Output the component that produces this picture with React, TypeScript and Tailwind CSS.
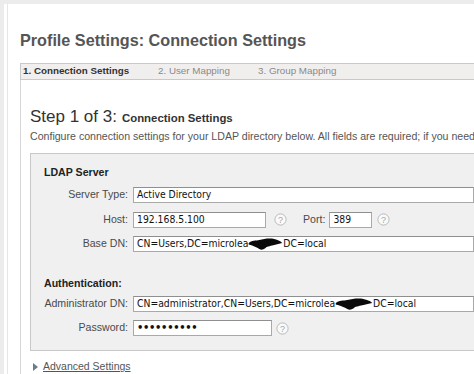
import React from 'react'

const sans = "font-['Liberation_Sans',Arial,sans-serif]"
const field = "font-['DejaVu_Sans_Condensed','DejaVu_Sans',sans-serif]"

function Help(): React.ReactElement {
  return (
    <svg width="13" height="13" viewBox="0 0 13 13" className="shrink-0">
      <circle cx="6.5" cy="6.5" r="5.6" fill="#fafafa" stroke="#b9b9b9" strokeWidth="1" />
      <text x="6.5" y="9.6" textAnchor="middle" fontSize="9" fill="#a5a5a5" fontFamily="Liberation Sans, Arial, sans-serif">?</text>
    </svg>
  )
}

function Blob({ w }: { w: number }): React.ReactElement {
  return (
    <svg width={w} height="14" viewBox="0 0 40 14" preserveAspectRatio="none" className="shrink-0">
      <path
        d="M1 6 C4 3 9 4 13 3 C18 2 24 1 30 2 C34 3 38 4 39 6 C36 7 33 7 30 8 C27 9 22 9 20 11 C17 13 15 13 13 12 C10 10 6 9 3 8 C1 8 0 7 1 6 Z"
        fill="#0a0a0a"
      />
    </svg>
  )
}

function Input({ w, children }: { w?: string; children?: React.ReactNode }): React.ReactElement {
  return (
    <div
      className={`${w ?? 'flex-1'} h-[16px] flex items-center pl-[3px] bg-white border border-[#a9a9a9] border-t-[#8f8f8f] text-[10.3px] text-[#111] whitespace-nowrap overflow-hidden ${field}`}
    >
      {children}
    </div>
  )
}

function Row({ label, children }: { label: string; children: React.ReactNode }): React.ReactElement {
  return (
    <div className="flex items-center h-[16px]">
      <div className={`w-[84px] shrink-0 text-right text-[10.6px] text-[#4a4a4a] whitespace-nowrap ${sans}`}>{label}</div>
      <div className="ml-[5px] flex flex-1 items-center">{children}</div>
    </div>
  )
}

export default function App(): React.ReactElement {
  return (
    <div className="w-[474px] h-[374px] overflow-hidden bg-[#ececec] pt-[4px] pl-[4px]">
      <div className="h-full bg-white pl-[3px]">
        <div className="h-full border-l border-[#e6e6e6] flex flex-col">
          <div className={`ml-[12px] mt-[25px] h-[22px] leading-[22px] text-[16.2px] font-bold text-[#555] whitespace-nowrap ${sans}`}>
            Profile Settings: Connection Settings
          </div>

          <div className="ml-[12px] mt-[12px] flex-1 flex flex-col">
            <div className={`h-[17px] flex items-center bg-[#f1eeee] border border-r-0 border-[#c9c9c9] text-[9.8px] whitespace-nowrap ${sans}`}>
              <span className="ml-[2px] w-[135px] font-bold text-[#333]">1. Connection Settings</span>
              <span className="w-[100px] text-[#8a8a8a]">2. User Mapping</span>
              <span className="text-[#8a8a8a]">3. Group Mapping</span>
            </div>

            <div className="flex-1 border-l border-[#d6d6d6] pl-[9px] pt-[27px]">
              <div className={`h-[20px] flex items-baseline whitespace-nowrap text-[#333] ${sans}`}>
                <span className="text-[17px] leading-[20px]">Step 1 of 3:</span>
                <span className="ml-[5px] text-[11.4px] font-bold">Connection Settings</span>
              </div>
              <div className={`mt-[2px] h-[14px] leading-[14px] text-[10.6px] text-[#555] whitespace-nowrap ${sans}`}>
                Configure connection settings for your LDAP directory below. All fields are required; if you need
              </div>

              <div className="mt-[10px] bg-[#f0f0f0] border border-r-0 border-[#c8c8c8] pl-[13px] pt-[11px] pb-[14px]">
                <div className={`h-[14px] leading-[14px] text-[10.6px] font-bold text-[#222] ${sans}`}>LDAP Server</div>

                <div className="mt-[8px] flex flex-col gap-[8.5px]">
                  <Row label="Server Type:">
                    <Input>Active Directory</Input>
                  </Row>
                  <Row label="Host:">
                    <Input w="w-[133px]">192.168.5.100</Input>
                    <div className="ml-[8px]">
                      <Help />
                    </div>
                    <span className={`ml-[16px] text-[10.6px] text-[#4a4a4a] ${sans}`}>Port:</span>
                    <div className="ml-[4px]">
                      <Input w="w-[43px]">389</Input>
                    </div>
                    <div className="ml-[5px]">
                      <Help />
                    </div>
                  </Row>
                  <Row label="Base DN:">
                    <Input>
                      <span>CN=Users,DC=microlea</span>
                      <Blob w={35} />
                      <span>DC=local</span>
                    </Input>
                  </Row>
                </div>

                <div className={`mt-[24px] h-[14px] leading-[14px] text-[10.6px] font-bold text-[#222] ${sans}`}>Authentication:</div>

                <div className="mt-[6px] flex flex-col gap-[8px]">
                  <Row label="Administrator DN:">
                    <Input w="w-[341px]">
                      <span>CN=administrator,CN=Users,DC=microlea</span>
                      <Blob w={38} />
                      <span>DC=local</span>
                    </Input>
                  </Row>
                  <Row label="Password:">
                    <Input w="w-[139px]">
                      <span className="tracking-[-0.3px] text-[11px] font-bold">••••••••••</span>
                    </Input>
                    <div className="ml-[4px]">
                      <Help />
                    </div>
                  </Row>
                </div>
              </div>

              <div className={`mt-[9px] h-[14px] flex items-center ${sans}`}>
                <svg width="6" height="8" viewBox="0 0 6 8" className="ml-[3px]">
                  <path d="M0 0 L5 4 L0 8 Z" fill="#6b7d8c" />
                </svg>
                <span className="ml-[4px] text-[10.5px] text-[#555] underline">Advanced Settings</span>
              </div>
            </div>
          </div>
        </div>
      </div>
    </div>
  )
}
